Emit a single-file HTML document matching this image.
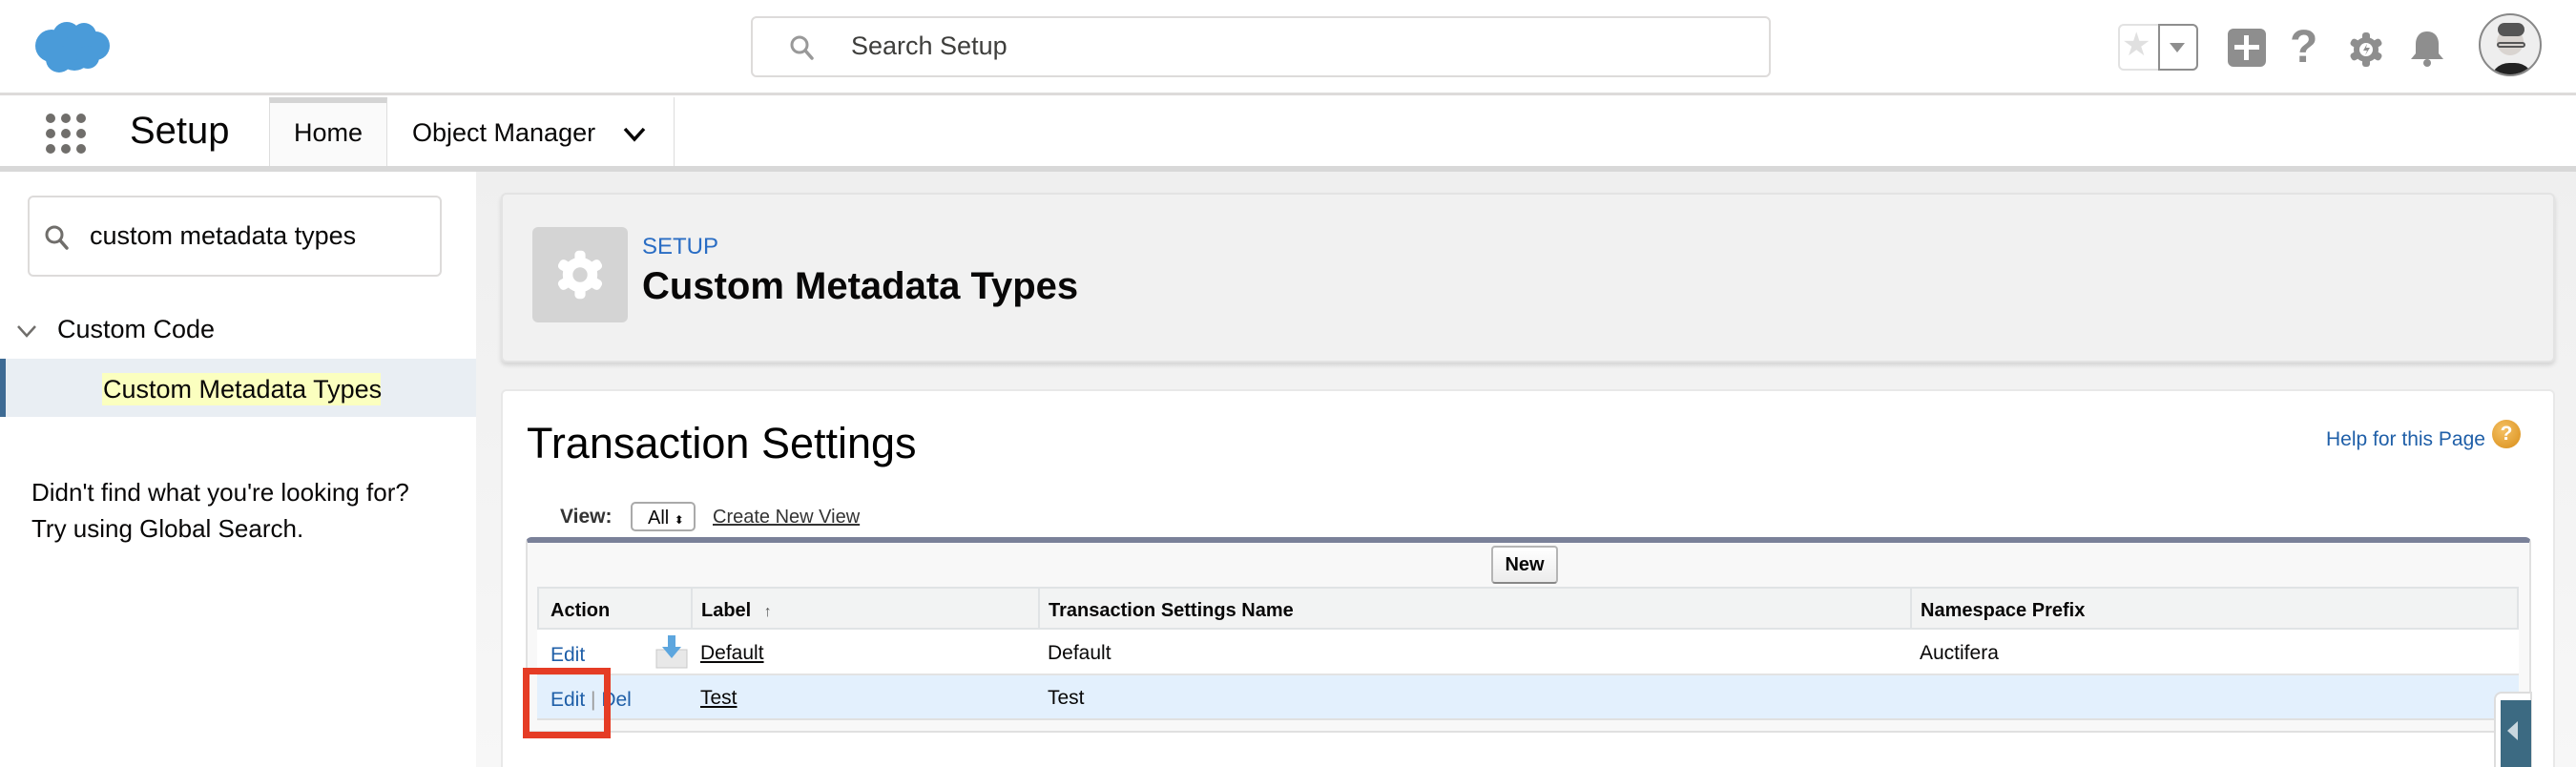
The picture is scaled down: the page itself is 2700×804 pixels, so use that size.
<!DOCTYPE html>
<html><head><meta charset="utf-8"><style>
*{box-sizing:border-box;margin:0;padding:0}
html,body{width:2700px;height:804px;overflow:hidden}
body{background:#fff;font-family:"Liberation Sans",sans-serif;position:relative;color:#080707}
.a{position:absolute}
</style></head><body>
<div class="a" style="left:0;top:0;width:2700px;height:100px;background:#fff;border-bottom:3px solid #dddbda"></div>
<svg class="a" style="left:32px;top:20px" width="86" height="60" viewBox="0 0 86 60"><g fill="#4a9bd9"><circle cx="22" cy="28" r="17"/><circle cx="38" cy="18" r="15"/><circle cx="56" cy="17" r="13"/><circle cx="68" cy="28" r="15"/><circle cx="46" cy="36" r="18"/><circle cx="30" cy="42" r="14"/><circle cx="60" cy="40" r="12"/></g></svg>
<div class="a" style="left:787px;top:17px;width:1069px;height:64px;border:2px solid #dddbda;border-radius:6px;background:#fff"></div>
<svg class="a" style="left:826px;top:35px" width="30" height="30" viewBox="0 0 30 30"><circle cx="12" cy="12" r="8" fill="none" stroke="#999" stroke-width="3"/><line x1="18" y1="18" x2="25" y2="26" stroke="#999" stroke-width="3.5" stroke-linecap="round"/></svg>
<div class="a" style="left:892px;top:33px;font-size:27px;color:#3e3e3c">Search Setup</div>
<div class="a" style="left:2220px;top:25px;width:84px;height:49px;border:2px solid #e2e2e2;border-radius:6px"></div>
<div class="a" style="left:2262px;top:25px;width:42px;height:49px;border:2px solid #8e8e8e;border-radius:0 6px 6px 0"></div>
<div class="a" style="left:2224px;top:27px;font-size:34px;color:#e0e0e0">★</div>
<div class="a" style="left:2274px;top:45px;width:0;height:0;border-left:8px solid transparent;border-right:8px solid transparent;border-top:10px solid #8e8e8e"></div>
<div class="a" style="left:2335px;top:30px;width:40px;height:40px;background:#8e8e8e;border-radius:6px"></div>
<div class="a" style="left:2352px;top:37px;width:5px;height:26px;background:#fff"></div>
<div class="a" style="left:2342px;top:47px;width:26px;height:5px;background:#fff"></div>
<div class="a" style="left:2400px;top:22px;font-size:48px;font-weight:bold;color:#8e8e8e">?</div>
<svg class="a" style="left:2460px;top:32px" width="40" height="40" viewBox="0 0 40 40"><g fill="#8e8e8e"><circle cx="20" cy="20" r="13"/><rect x="16" y="2" width="8" height="36" rx="3"/><rect x="16" y="2" width="8" height="36" rx="3" transform="rotate(60 20 20)"/><rect x="16" y="2" width="8" height="36" rx="3" transform="rotate(120 20 20)"/></g><circle cx="20" cy="20" r="7" fill="#fff"/><path d="M21 14l-4 7h4l-2 5 5-8h-4z" fill="#8e8e8e"/></svg>
<svg class="a" style="left:2524px;top:30px" width="40" height="42" viewBox="0 0 40 42"><path d="M20 3c-8 0-12 6-12 13v10l-5 6h34l-5-6V16c0-7-4-13-12-13z" fill="#8e8e8e"/><circle cx="20" cy="36" r="4" fill="#8e8e8e"/></svg>
<div class="a" style="left:2598px;top:14px;width:66px;height:66px;border-radius:50%;border:2px solid #888;background:radial-gradient(circle at 50% 45%,#d9d4d0 0 30%,#eee 31%);overflow:hidden"><div style="position:absolute;left:18px;top:8px;width:28px;height:14px;background:#555;border-radius:10px"></div><div style="position:absolute;left:10px;top:50px;width:46px;height:20px;background:#222;border-radius:20px 20px 0 0"></div><div style="position:absolute;left:17px;top:28px;width:30px;height:6px;border:2px solid #555;border-radius:3px"></div></div>
<div class="a" style="left:0;top:174px;width:2700px;height:6px;background:#d8d8d8"></div>
<svg class="a" style="left:47px;top:118px" width="44" height="44" viewBox="0 0 44 44"><g fill="#706e6b"><circle cx="6" cy="6" r="5"/><circle cx="22" cy="6" r="5"/><circle cx="38" cy="6" r="5"/><circle cx="6" cy="22" r="5"/><circle cx="22" cy="22" r="5"/><circle cx="38" cy="22" r="5"/><circle cx="6" cy="38" r="5"/><circle cx="22" cy="38" r="5"/><circle cx="38" cy="38" r="5"/></g></svg>
<div class="a" style="left:136px;top:115px;font-size:40px;color:#080707">Setup</div>
<div class="a" style="left:282px;top:102px;width:124px;height:72px;background:#fafafa;border-left:1px solid #ddd;border-right:1px solid #ddd;border-top:6px solid #d4d4d4"></div>
<div class="a" style="left:308px;top:124px;font-size:27px">Home</div>
<div class="a" style="left:406px;top:102px;width:301px;height:72px;border-right:1px solid #ddd"></div>
<div class="a" style="left:432px;top:124px;font-size:27px">Object Manager</div>
<svg class="a" style="left:652px;top:132px" width="26" height="18" viewBox="0 0 26 18"><path d="M3 3l10 11 10-11" fill="none" stroke="#080707" stroke-width="3.5"/></svg>
<div class="a" style="left:29px;top:205px;width:434px;height:85px;border:2px solid #dddbda;border-radius:6px"></div>
<svg class="a" style="left:44px;top:233px" width="32" height="32" viewBox="0 0 32 32"><circle cx="13" cy="13" r="8" fill="none" stroke="#706e6b" stroke-width="3"/><line x1="19" y1="19" x2="26" y2="27" stroke="#706e6b" stroke-width="3.5" stroke-linecap="round"/></svg>
<div class="a" style="left:94px;top:232px;font-size:27px">custom metadata types</div>
<svg class="a" style="left:17px;top:339px" width="24" height="16" viewBox="0 0 24 16"><path d="M2 3l9 10 9-10" fill="none" stroke="#706e6b" stroke-width="2.5"/></svg>
<div class="a" style="left:60px;top:330px;font-size:27px">Custom Code</div>
<div class="a" style="left:0;top:376px;width:499px;height:61px;background:#e9eef3;border-left:6px solid #3e6b94"></div>
<div class="a" style="left:107px;top:391px;width:292px;height:34px;background:#fbffbf"></div>
<div class="a" style="left:108px;top:393px;font-size:27px">Custom Metadata Types</div>
<div class="a" style="left:33px;top:497px;font-size:26px;line-height:38px">Didn't find what you're looking for?<br>Try using Global Search.</div>
<div class="a" style="left:499px;top:180px;width:2201px;height:624px;background:linear-gradient(#efefef,#f7f7f7)"></div>
<div class="a" style="left:525px;top:202px;width:2153px;height:178px;background:#f1f1f1;border:2px solid #e3e3e3;border-radius:6px;box-shadow:0 3px 4px rgba(0,0,0,.12)"></div>
<div class="a" style="left:558px;top:238px;width:100px;height:100px;background:#d4d4d4;border-radius:6px"></div>
<svg class="a" style="left:580px;top:260px" width="56" height="56" viewBox="0 0 40 40"><g fill="#fff"><circle cx="20" cy="20" r="13"/><rect x="16" y="2" width="8" height="36" rx="3"/><rect x="16" y="2" width="8" height="36" rx="3" transform="rotate(60 20 20)"/><rect x="16" y="2" width="8" height="36" rx="3" transform="rotate(120 20 20)"/></g><circle cx="20" cy="20" r="5.5" fill="#d4d4d4"/></svg>
<div class="a" style="left:673px;top:245px;font-size:24px;color:#2a6dc4">SETUP</div>
<div class="a" style="left:673px;top:278px;font-size:40px;font-weight:bold">Custom Metadata Types</div>
<div class="a" style="left:525px;top:408px;width:2153px;height:400px;background:#fff;border:2px solid #e8e8e8;border-bottom:none;border-radius:6px 6px 0 0"></div>
<div class="a" style="left:552px;top:439px;font-size:45px;color:#000">Transaction Settings</div>
<div class="a" style="left:2438px;top:449px;font-size:21px;color:#1f5fa8">Help for this Page</div>
<div class="a" style="left:2612px;top:440px;width:30px;height:30px;border-radius:50%;background:radial-gradient(circle at 40% 35%,#f5c164,#d88d18);color:#fff;font-size:21px;text-align:center;line-height:30px;font-weight:bold">?</div>
<div class="a" style="left:587px;top:530px;font-size:21px;font-weight:bold;color:#333">View:</div>
<div class="a" style="left:661px;top:526px;width:68px;height:31px;border:2px solid #aaa;border-radius:5px;font-size:20px;padding:4px 0 0 16px">All <span style="font-size:12px">⬍</span></div>
<div class="a" style="left:747px;top:531px;font-size:20px;color:#333;text-decoration:underline">Create New View</div>
<div class="a" style="left:551px;top:563px;width:2102px;height:205px;background:#f8f8f8;border:2px solid #e0e0e0;border-top:6px solid #7a8199;border-radius:6px 6px 0 0"></div>
<div class="a" style="left:1563px;top:572px;width:70px;height:40px;border:2px solid #b5b5b5;border-bottom-color:#888;border-radius:4px;background:linear-gradient(#fff,#ececec);font-size:20px;font-weight:bold;text-align:center;line-height:36px">New</div>
<div class="a" style="left:563px;top:615px;width:2077px;height:45px;background:#f2f3f3;border:2px solid #e0e3e5"></div>
<div class="a" style="left:724px;top:615px;width:2px;height:45px;background:#e0e3e5"></div>
<div class="a" style="left:1088px;top:615px;width:2px;height:45px;background:#e0e3e5"></div>
<div class="a" style="left:2002px;top:615px;width:2px;height:45px;background:#e0e3e5"></div>
<div class="a" style="left:577px;top:629px;font-size:20px;font-weight:bold">Action</div>
<div class="a" style="left:735px;top:629px;font-size:20px;font-weight:bold">Label <span style="font-weight:normal;color:#555;margin-left:8px;font-size:16px">↑</span></div>
<div class="a" style="left:1099px;top:629px;font-size:20px;font-weight:bold">Transaction Settings Name</div>
<div class="a" style="left:2013px;top:629px;font-size:20px;font-weight:bold">Namespace Prefix</div>
<div class="a" style="left:563px;top:660px;width:2077px;height:48px;background:#fff;border-bottom:2px solid #e3e3e3"></div>
<div class="a" style="left:563px;top:708px;width:2077px;height:47px;background:#e3f0fd;border-bottom:2px solid #e0e0e0"></div>
<div class="a" style="left:577px;top:675px;font-size:21px;color:#1f5fa8">Edit</div>
<svg class="a" style="left:687px;top:665px" width="34" height="36" viewBox="0 0 34 36"><rect x="1" y="16" width="32" height="19" fill="#e8e8e8" stroke="#c8c8c8"/><rect x="13" y="1" width="8" height="14" fill="#5da6de"/><path d="M7 13h20l-10 12z" fill="#5da6de"/></svg>
<div class="a" style="left:734px;top:673px;font-size:21px;text-decoration:underline">Default</div>
<div class="a" style="left:1098px;top:673px;font-size:21px">Default</div>
<div class="a" style="left:2012px;top:673px;font-size:21px">Auctifera</div>
<div class="a" style="left:577px;top:722px;font-size:21px;color:#1f5fa8">Edit <span style="color:#999">|</span> Del</div>
<div class="a" style="left:734px;top:720px;font-size:21px;text-decoration:underline">Test</div>
<div class="a" style="left:1098px;top:720px;font-size:21px">Test</div>
<div class="a" style="left:548px;top:700px;width:92px;height:74px;border:7px solid #e53c25"></div>
<div class="a" style="left:2614px;top:725px;width:40px;height:82px;background:#fff;border-radius:8px 0 0 0;border:2px solid #ddd"></div>
<div class="a" style="left:2621px;top:734px;width:32px;height:70px;background:#3c6a82"></div>
<div class="a" style="left:2628px;top:756px;width:0;height:0;border-top:10px solid transparent;border-bottom:10px solid transparent;border-right:11px solid #c9d7df"></div>
</body></html>
